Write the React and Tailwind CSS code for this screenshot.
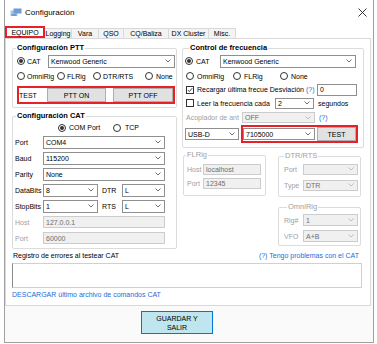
import React from "react";

const Chevron = ({ c = "#606060" }) => (
  <svg width="6" height="4" viewBox="0 0 6 4" className="shrink-0">
    <path d="M0.5 0.5 L3 3 L5.5 0.5" fill="none" stroke={c} strokeWidth="0.9" />
  </svg>
);

function Combo({ value, className, disabled }) {
  return (
    <div
      className={`flex items-center justify-between pl-[2px] pr-[3px] border shrink-0 ${
        disabled
          ? "border-[#cccccc] bg-[#f0f0f0] text-[#6d6d6d]"
          : "border-[#8f8f8f] bg-white text-black"
      } ${className}`}
    >
      <span className="whitespace-nowrap leading-none">{value}</span>
      <Chevron c={disabled ? "#b8b8b8" : "#606060"} />
    </div>
  );
}

function Field({ value, className, disabled }) {
  return (
    <div
      className={`flex items-center pl-[2px] border shrink-0 ${
        disabled
          ? "border-[#cccccc] bg-[#f0f0f0] text-[#6d6d6d]"
          : "border-[#8f8f8f] bg-white text-black"
      } ${className}`}
    >
      <span className="whitespace-nowrap leading-none">{value}</span>
    </div>
  );
}

function Radio({ checked }) {
  return (
    <span className="w-[8px] h-[8px] rounded-full border border-[#333333] bg-white flex items-center justify-center shrink-0">
      {checked && <span className="w-[4px] h-[4px] rounded-full bg-[#333333]" />}
    </span>
  );
}

function Check({ checked }) {
  return (
    <span className="w-[8px] h-[8px] border border-[#333333] bg-white flex items-center justify-center shrink-0">
      {checked && (
        <svg width="6" height="6" viewBox="0 0 6 6">
          <path d="M0.8 3 L2.4 4.6 L5.2 1.2" fill="none" stroke="#333" strokeWidth="0.9" />
        </svg>
      )}
    </span>
  );
}

function Btn({ children, className }) {
  return (
    <div className={`flex items-center justify-center border border-[#adadad] bg-[#e1e1e1] leading-none shrink-0 ${className}`}>
      {children}
    </div>
  );
}

function Group({ title, className, legendClass, children, disabled }) {
  return (
    <fieldset className={`border border-[#dcdcdc] rounded-[2px] min-w-0 shrink-0 ${className}`}>
      <legend
        className={`px-[1px] leading-[10px] text-[7.5px] ${
          disabled ? "text-[#a0a0a0]" : "font-bold"
        } ${legendClass}`}
      >
        {title}
      </legend>
      {children}
    </fieldset>
  );
}

function Row({ label, children, gray }) {
  return (
    <div className="h-[16px] flex items-center">
      <span className={`w-[28px] shrink-0 ${gray ? "text-[#a0a0a0]" : ""}`}>{label}</span>
      {children}
    </div>
  );
}

const tabs = [
  { t: "Logging", w: "w-[27px]" },
  { t: "Vara", w: "w-[27px]" },
  { t: "QSO", w: "w-[25px]" },
  { t: "CQ/Baliza", w: "w-[45px]" },
  { t: "DX Cluster", w: "w-[40px]" },
  { t: "Misc.", w: "w-[27px]" },
];

export default function App() {
  return (
    <div className="w-[377px] h-[344px] bg-white pl-[4px] overflow-hidden font-['Liberation_Sans',Arial,sans-serif] text-[7px] leading-[9px] text-black">
      <div className="w-[370px] h-[343px] border-x border-b border-[#a0a0a0] bg-[#fafafa] flex flex-col">
        {/* title bar */}
        <div className="h-[24px] bg-white flex items-center shrink-0">
          <svg className="ml-[5px]" width="12" height="9" viewBox="0 0 12 9">
            <path d="M0.5 2.5 h7 v5.5 h-7z" fill="#a9c6ea" />
            <path d="M3.5 0.5 h8 v5 h-8z" fill="#6f9bd6" />
            <path d="M1.5 6.5 h5 v1 h-5z" fill="#4c6f9f" />
          </svg>
          <span className="ml-[3px] text-[8px]">Configuración</span>
          <svg className="ml-auto mr-[6px]" width="9" height="9" viewBox="0 0 9 9">
            <path d="M0.5 0.5 L8.5 8.5 M8.5 0.5 L0.5 8.5" stroke="#222" strokeWidth="0.9" />
          </svg>
        </div>

        {/* tabs */}
        <div className="h-[14px] flex items-end bg-white shrink-0">
          <div className="w-[40px] h-[12px] border-2 border-[#e8202a] bg-white flex items-center justify-center leading-none">
            EQUIPO
          </div>
          {tabs.map((tab) => (
            <div
              key={tab.t}
              className={`${tab.w} h-[10px] border-t border-r border-[#d9d9d9] bg-[#f3f3f3] flex items-center justify-center leading-none`}
            >
              {tab.t}
            </div>
          ))}
        </div>

        {/* tab page */}
        <div className="w-[366px] h-[268px] border border-[#d9d9d9] bg-white flex flex-col shrink-0">
          <div className="flex mt-[4px] ml-[6px]">
            {/* left column */}
            <div className="flex flex-col w-[165px]">
              <Group title="Configuración PTT" className="w-[165px] h-[65px] pl-[4px] pr-[1px]" legendClass="ml-[-1px]">
                <div className="h-[16px] flex items-center">
                  <Radio checked />
                  <span className="ml-[2px]">CAT</span>
                  <Combo value="Kenwood Generic" className="ml-auto w-[127px] h-[13px]" />
                </div>
                <div className="h-[14px] flex items-center">
                  <span className="w-[40px] flex items-center shrink-0">
                    <Radio />
                    <span className="ml-[2px]">OmniRig</span>
                  </span>
                  <span className="w-[36px] flex items-center shrink-0">
                    <Radio />
                    <span className="ml-[2px]">FLRig</span>
                  </span>
                  <span className="w-[52px] flex items-center shrink-0">
                    <Radio />
                    <span className="ml-[2px]">DTR/RTS</span>
                  </span>
                  <span className="flex items-center shrink-0">
                    <Radio />
                    <span className="ml-[3px]">None</span>
                  </span>
                </div>
                <div className="mt-[3px] w-[158px] h-[18px] border-2 border-[#e8202a] flex items-center">
                  <span className="w-[28px] shrink-0">TEST</span>
                  <Btn className="w-[59px] h-[14px]">PTT ON</Btn>
                  <Btn className="ml-[7px] w-[60px] h-[14px]">PTT OFF</Btn>
                </div>
              </Group>

              <Group title="Configuración CAT" className="mt-[3px] w-[165px] h-[138px] pl-[2px]" legendClass="ml-[1px]">
                <div className="h-[13px] flex items-center pl-[43px]">
                  <span className="w-[55px] flex items-center shrink-0">
                    <Radio checked />
                    <span className="ml-[3px]">COM Port</span>
                  </span>
                  <span className="flex items-center">
                    <Radio />
                    <span className="ml-[4px]">TCP</span>
                  </span>
                </div>
                <Row label="Port">
                  <Combo value="COM4" className="w-[122px] h-[13px]" />
                </Row>
                <Row label="Baud">
                  <Combo value="115200" className="w-[122px] h-[13px]" />
                </Row>
                <Row label="Parity">
                  <Combo value="None" className="w-[122px] h-[13px]" />
                </Row>
                <Row label="DataBits">
                  <Combo value="8" className="w-[55px] h-[13px]" />
                  <span className="ml-[4px] w-[20px] shrink-0">DTR</span>
                  <Combo value="L" className="w-[43px] h-[13px]" />
                </Row>
                <Row label="StopBits">
                  <Combo value="1" className="w-[55px] h-[13px]" />
                  <span className="ml-[4px] w-[20px] shrink-0">RTS</span>
                  <Combo value="L" className="w-[43px] h-[13px]" />
                </Row>
                <Row label="Host" gray>
                  <Field value="127.0.0.1" disabled className="w-[122px] h-[12px]" />
                </Row>
                <Row label="Port" gray>
                  <Field value="60000" disabled className="w-[122px] h-[12px]" />
                </Row>
              </Group>
            </div>

            {/* right column */}
            <div className="flex flex-col ml-[5px]">
              <Group title="Control de frecuencia" className="w-[182px] h-[105px] pl-[2px] pr-[6px]" legendClass="ml-[4px]">
                <div className="h-[16px] flex items-center">
                  <Radio checked />
                  <span className="ml-[3px] w-[24px] shrink-0">CAT</span>
                  <Combo value="Kenwood Generic" className="w-[136px] h-[13px]" />
                </div>
                <div className="h-[14px] flex items-center pl-[1px]">
                  <span className="w-[47px] flex items-center shrink-0">
                    <Radio />
                    <span className="ml-[3px]">OmniRig</span>
                  </span>
                  <span className="w-[47px] flex items-center shrink-0">
                    <Radio />
                    <span className="ml-[3px]">FLRig</span>
                  </span>
                  <span className="flex items-center shrink-0">
                    <Radio />
                    <span className="ml-[3px]">None</span>
                  </span>
                </div>
                <div className="h-[13px] flex items-center pl-[1px]">
                  <Check checked />
                  <span className="ml-[3px] whitespace-nowrap">Recargar última frecue Desviación</span>
                  <span className="ml-[2px] text-[#1a6ed8]">(?)</span>
                  <Field value="0" className="ml-auto w-[40px] h-[12px]" />
                </div>
                <div className="h-[14px] flex items-center pl-[1px]">
                  <Check />
                  <span className="ml-[3px] w-[78px] shrink-0 whitespace-nowrap">Leer la frecuencia cada</span>
                  <Combo value="2" className="w-[39px] h-[11px]" />
                  <span className="ml-[4px]">segundos</span>
                </div>
                <div className="h-[15px] flex items-center pl-[1px]">
                  <span className="w-[56px] shrink-0 whitespace-nowrap text-[#a0a0a0]">Acoplador de ant</span>
                  <Combo value="OFF" disabled className="w-[73px] h-[11px]" />
                  <span className="ml-[4px] text-[#1a6ed8]">(?)</span>
                </div>
                <div className="h-[18px] flex items-center">
                  <Combo value="USB-D" className="w-[54px] h-[12px]" />
                  <div className="ml-[2px] w-[117px] h-[18px] border-2 border-[#e8202a] flex items-center shrink-0">
                    <Combo value="7105000" className="w-[72px] h-[12px]" />
                    <Btn className="ml-[2px] w-[39px] h-[14px]">TEST</Btn>
                  </div>
                </div>
              </Group>

              <div className="flex">
                <Group title="FLRig" disabled className="ml-[1px] mt-[2px] w-[83px] h-[46px] pl-[3px]" legendClass="ml-[-1px]">
                  <div className="mt-[2px] h-[14px] flex items-center">
                    <span className="w-[16px] shrink-0 text-[#a0a0a0]">Host</span>
                    <Field value="localhost" disabled className="w-[58px] h-[11px]" />
                  </div>
                  <div className="h-[14px] flex items-center">
                    <span className="w-[16px] shrink-0 text-[#a0a0a0]">Port</span>
                    <Field value="12345" disabled className="w-[58px] h-[11px]" />
                  </div>
                </Group>

                <div className="flex flex-col ml-[12px]">
                  <Group title="DTR/RTS" disabled className="mt-[3px] w-[83px] h-[46px] pl-[5px]" legendClass="ml-0">
                    <div className="h-[16px] flex items-center">
                      <span className="w-[19px] shrink-0 text-[#a0a0a0]">Port</span>
                      <Combo value="" disabled className="w-[55px] h-[11px]" />
                    </div>
                    <div className="h-[16px] flex items-center">
                      <span className="w-[19px] shrink-0 text-[#a0a0a0]">Type</span>
                      <Combo value="DTR" disabled className="w-[55px] h-[11px]" />
                    </div>
                  </Group>
                  <Group title="OmniRig" disabled className="mt-[5px] w-[83px] h-[44px] pl-[5px]" legendClass="ml-[3px]">
                    <div className="h-[16px] flex items-center">
                      <span className="w-[19px] shrink-0 text-[#a0a0a0]">Rig#</span>
                      <Combo value="1" disabled className="w-[55px] h-[12px]" />
                    </div>
                    <div className="h-[16px] flex items-center">
                      <span className="w-[19px] shrink-0 text-[#a0a0a0]">VFO</span>
                      <Combo value="A+B" disabled className="w-[55px] h-[12px]" />
                    </div>
                  </Group>
                </div>
              </div>
            </div>
          </div>

          <div className="h-[12px] flex items-center">
            <span className="ml-[7px]">Registro de errores al testear CAT</span>
            <span className="ml-auto mr-[11px] text-[#1a6ed8]">(?) Tengo problemas con el CAT</span>
          </div>
          <div className="mt-[2px] ml-[6px] w-[350px] h-[25px] border border-[#d0d0d0] border-l-[#8a8a8a] bg-white" />
          <div className="mt-[1px] ml-[6px] h-[10px] flex items-center text-[#1a6ed8]">
            DESCARGAR último archivo de comandos CAT
          </div>
        </div>

        {/* save button */}
        <div className="ml-[136px] mt-[5px] w-[72px] h-[23px] border border-[#0078d7] bg-[#bfe5ee] flex flex-col items-center justify-center leading-[9px] text-center">
          <span>GUARDAR Y</span>
          <span>SALIR</span>
        </div>
      </div>
    </div>
  );
}
